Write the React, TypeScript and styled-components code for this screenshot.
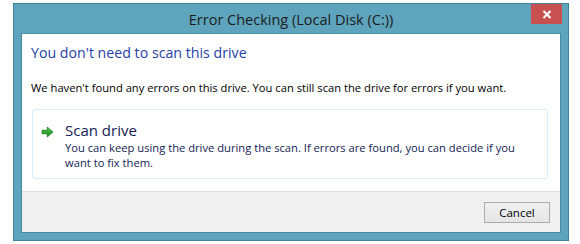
import React from 'react'
import styled, { createGlobalStyle } from 'styled-components'

const GlobalStyle = createGlobalStyle`
  html, body {
    margin: 0;
    padding: 0;
    background: #ffffff;
  }
  body {
    font-family: 'Open Sans', 'Noto Sans', sans-serif;
  }
`

const Window = styled.div`
  display: flex;
  flex-direction: column;
  width: 556px;
  height: 238px;
  margin: 3px 0 0 13px;
  box-sizing: border-box;
  background: #5ea4bd;
  border: 1px solid #40829a;
`

const TitleBar = styled.div`
  display: grid;
  grid-template-columns: 1fr auto 1fr;
  height: 29px;
  flex-shrink: 0;
`

const Title = styled.div`
  grid-column: 2;
  align-self: center;
  padding-top: 2px;
  font-size: 14.5px;
  color: #1c1c1c;
  white-space: nowrap;
`

const CloseButton = styled.div`
  grid-column: 3;
  justify-self: end;
  align-self: start;
  display: flex;
  align-items: center;
  justify-content: center;
  width: 31px;
  height: 20px;
  margin-right: 6px;
  background: #c75050;
`

const Client = styled.div`
  display: flex;
  flex-direction: column;
  flex: 1;
  margin: 0 7px 7px;
  background: #ffffff;
  border: 1px solid #47889f;
  border-top-color: #4e91a8;
`

const Body = styled.div`
  flex: 1;
  padding: 9px 12px 0 9px;
`

const Heading = styled.div`
  font-size: 14.2px;
  color: #1f3fa6;
  line-height: 20px;
`

const Message = styled.div`
  margin-top: 17px;
  font-size: 11.2px;
  line-height: 16px;
  color: #000000;
  white-space: nowrap;
`

const CommandLink = styled.div`
  display: flex;
  align-items: flex-start;
  gap: 11px;
  margin-top: 13px;
  margin-left: 1px;
  height: 70px;
  box-sizing: border-box;
  padding: 10px 10px 0 8px;
  border: 1px solid #d5eefa;
  border-radius: 3px;
`

const ArrowIcon = styled.svg`
  flex-shrink: 0;
  margin-top: 6px;
`

const LinkText = styled.div`
  display: flex;
  flex-direction: column;
`

const LinkTitle = styled.div`
  font-size: 15px;
  line-height: 20px;
  color: #151c55;
`

const LinkNote = styled.div`
  font-size: 11.2px;
  line-height: 15px;
  color: #151c55;
`

const Footer = styled.div`
  display: flex;
  justify-content: flex-end;
  align-items: center;
  height: 40px;
  padding-right: 10px;
  background: #f0f0f0;
  border-top: 1px solid #dfdfdf;
`

const Button = styled.div`
  display: flex;
  align-items: center;
  justify-content: center;
  width: 66px;
  height: 21px;
  box-sizing: border-box;
  border: 1px solid #acacac;
  background: linear-gradient(#f0f0f0, #e5e5e5);
  font-size: 11.5px;
  color: #000000;
`

function GreenArrow() {
  return (
    <ArrowIcon width="13" height="12" viewBox="0 0 13 12">
      <defs>
        <linearGradient id="arrowFill" x1="0" y1="0" x2="0" y2="1">
          <stop offset="0" stopColor="#6fd36a" />
          <stop offset="0.5" stopColor="#2ea82e" />
          <stop offset="1" stopColor="#178a1e" />
        </linearGradient>
      </defs>
      <path
        d="M1 4.2 H6.2 V1 L12 6 L6.2 11 V7.8 H1 Z"
        fill="url(#arrowFill)"
        stroke="#1f7f24"
        strokeWidth="0.8"
        strokeLinejoin="round"
      />
    </ArrowIcon>
  )
}

export default function App() {
  return (
    <>
      <GlobalStyle />
      <Window>
        <TitleBar>
          <Title>Error Checking (Local Disk (C:))</Title>
          <CloseButton>
            <svg width="10" height="9" viewBox="0 0 10 9">
              <path d="M1.5 1 L8.5 8 M8.5 1 L1.5 8" stroke="#ffffff" strokeWidth="2" />
            </svg>
          </CloseButton>
        </TitleBar>
        <Client>
          <Body>
            <Heading>You don't need to scan this drive</Heading>
            <Message>
              We haven't found any errors on this drive. You can still scan the drive for errors if you want.
            </Message>
            <CommandLink>
              <GreenArrow />
              <LinkText>
                <LinkTitle>Scan drive</LinkTitle>
                <LinkNote>
                  You can keep using the drive during the scan. If errors are found, you can decide if you
                  <br />
                  want to fix them.
                </LinkNote>
              </LinkText>
            </CommandLink>
          </Body>
          <Footer>
            <Button>Cancel</Button>
          </Footer>
        </Client>
      </Window>
    </>
  )
}
